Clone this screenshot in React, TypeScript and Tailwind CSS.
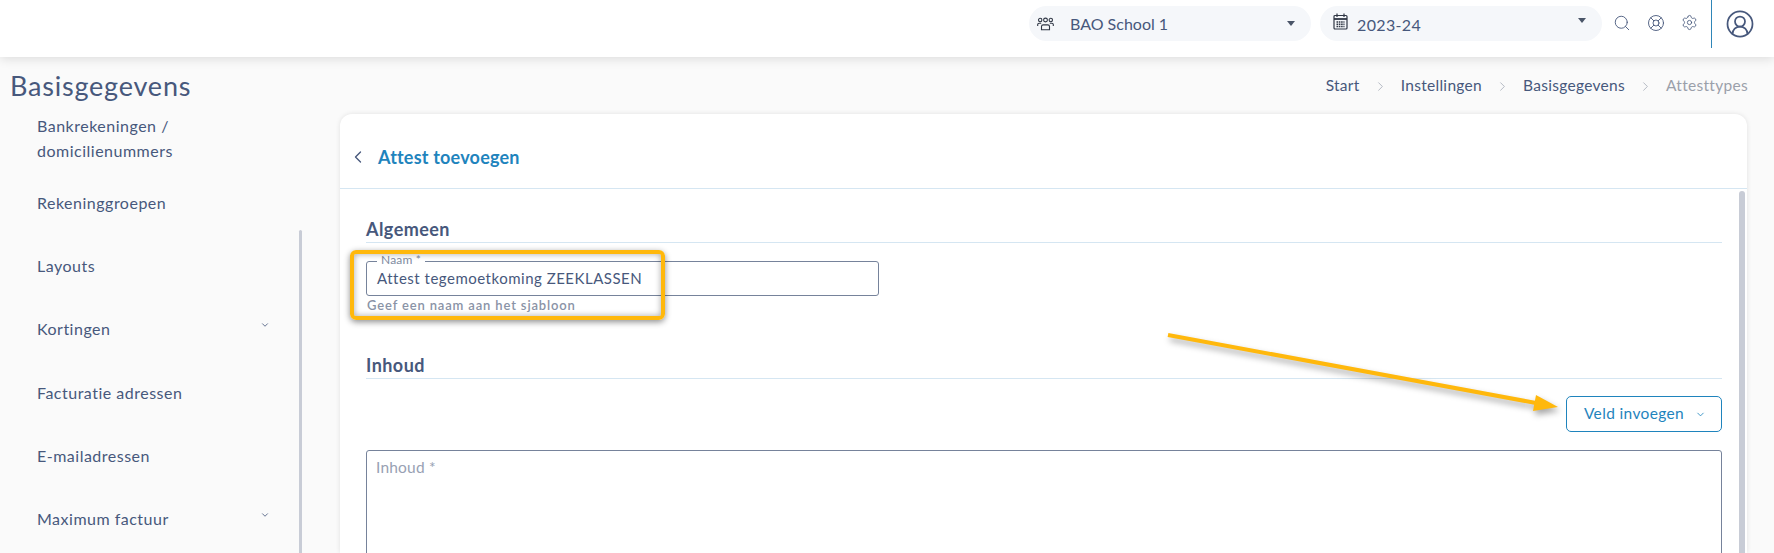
import { ChevronDown, ChevronLeft, ChevronRight, LifeBuoy, Search, Settings, CircleUserRound } from "lucide-react";

const font = { fontFamily: '"Lato", "Noto Sans", sans-serif' };

function GroupIcon() {
  return (
    <svg width="17" height="14" viewBox="0 0 17 14" fill="none" stroke="#2f3644" strokeWidth="1.1">
      <circle cx="3.2" cy="3" r="1.7" />
      <circle cx="8.5" cy="3" r="1.9" />
      <circle cx="13.8" cy="3" r="1.7" />
      <path d="M0.7 9V7.6c0-.8.7-1.3 1.5-1.3h2" />
      <path d="M16.3 9V7.6c0-.8-.7-1.3-1.5-1.3h-2" />
      <path d="M4.5 12.8V9.6c0-1 .8-1.7 1.7-1.7h4.6c.9 0 1.7.7 1.7 1.7v3.2z" />
    </svg>
  );
}

function CalendarIcon() {
  return (
    <svg width="15" height="17" viewBox="0 0 15 17" fill="none" stroke="#2f3644" strokeWidth="1.2">
      <rect x="1" y="2.5" width="13" height="13.5" rx="1" />
      <path d="M4 0.5v3.5M11 0.5v3.5" />
      <path d="M1 6h13" strokeWidth="1.8" />
      <path d="M3.5 9h8M3.5 11.2h8M3.5 13.4h8" strokeDasharray="1.6 .7" strokeWidth="1.5" />
    </svg>
  );
}

function Pill({ icon, label, textClass, caretClass }: { icon: React.ReactNode; label: string; textClass: string; caretClass: string }) {
  return (
    <div className="flex h-[35px] w-[282px] items-center rounded-full bg-[#f5f7fa] pl-[8px] pr-[16px]">
      {icon}
      <span className={`flex-1 text-[16px] text-[#47587c] ${textClass}`}>{label}</span>
      <span className={`h-0 w-0 border-x-[4.5px] border-t-[5px] border-x-transparent border-t-[#4a5568] ${caretClass}`} />
    </div>
  );
}

function Crumb({ label, last }: { label: string; last?: boolean }) {
  return (
    <>
      <span className={`text-[15.5px] tracking-[0.3px] ${last ? "text-[#9aa0aa]" : "text-[#47587c]"}`}>{label}</span>
      {!last && <ChevronRight size={15} strokeWidth={1} className="mx-[13px] text-[#8b93a3]" />}
    </>
  );
}

function NavItem({ label, chevron, className }: { label: string; chevron?: boolean; className: string }) {
  return (
    <div className={`flex items-center justify-between pl-[37px] pr-[70px] ${className}`}>
      <span className="text-[16px] leading-[25px] tracking-[0.5px] text-[#47587c]">{label}</span>
      {chevron && <ChevronDown size={10} strokeWidth={2} className="mb-[6px] text-[#47587c]" />}
    </div>
  );
}

function SectionTitle({ label }: { label: string }) {
  return (
    <div className="border-b border-[#d5e6f2] pb-[1px]">
      <h2 className="text-[18px] font-bold leading-[24px] tracking-[0.45px] text-[#47587c]">{label}</h2>
    </div>
  );
}

export default function App() {
  return (
    <div style={font} className="relative flex h-[553px] w-[1774px] flex-col overflow-hidden bg-[#fafafa]">
      <header className="z-10 flex h-[57px] shrink-0 items-start justify-end bg-white shadow-[0_2px_10px_rgba(0,0,0,0.12)]">
        <div className="mr-[11px] mt-[6px] flex gap-[9px]">
          <Pill
            icon={<span className="mr-[16px] flex"><GroupIcon /></span>}
            label="BAO School 1"
            textClass="pt-[1px]"
            caretClass=""
          />
          <Pill
            icon={<span className="mb-[4px] ml-[5px] mr-[9px] flex"><CalendarIcon /></span>}
            label="2023-24"
            textClass="pt-[2px] tracking-[0.35px]"
            caretClass="mb-[7px]"
          />
        </div>
        <div className="mt-[14px] flex gap-[16px] text-[#47587c]">
          <Search size={18} strokeWidth={1.2} />
          <LifeBuoy size={18} strokeWidth={1.2} />
          <Settings size={17} strokeWidth={1.2} />
        </div>
        <div className="ml-[13px] h-[48px] w-px bg-[#2f86b8]" />
        <CircleUserRound size={30} strokeWidth={1.4} className="ml-[13px] mr-[19px] mt-[9px] text-[#47587c]" />
      </header>

      <div className="flex min-h-0 flex-1">
        <aside className="relative w-[340px] shrink-0">
          <h1 className="ml-[10px] mt-[12px] text-[27px] leading-[34px] tracking-[0.8px] text-[#47587c]">Basisgegevens</h1>
          <nav className="mt-[10px]">
            <NavItem label="Bankrekeningen / domicilienummers" className="h-[50px] w-[300px] !pr-[40px]" />
            <NavItem label="Rekeninggroepen" className="mt-[14px] h-[50px]" />
            <NavItem label="Layouts" className="mt-[13px] h-[50px]" />
            <NavItem label="Kortingen" chevron className="mt-[13px] h-[50px]" />
            <NavItem label="Facturatie adressen" className="mt-[14px] h-[50px]" />
            <NavItem label="E-mailadressen" className="mt-[13px] h-[50px]" />
            <NavItem label="Maximum factuur" chevron className="mt-[13px] h-[50px]" />
          </nav>
          <div className="absolute bottom-0 right-[38px] top-[173px] w-[3px] rounded-t bg-[#c8ccd6]" />
        </aside>

        <main className="flex min-w-0 flex-1 flex-col pr-[27px]">
          <div className="-mr-px flex h-[57px] shrink-0 items-center justify-end pt-[1px]">
            <Crumb label="Start" />
            <Crumb label="Instellingen" />
            <Crumb label="Basisgegevens" />
            <Crumb label="Attesttypes" last />
          </div>
          <section className="relative min-h-0 flex-1 rounded-t-[12px] bg-white shadow-[0_0_5px_rgba(0,0,0,0.1)]">
            <div className="flex h-[75px] items-center border-b border-[#d5e6f2] pl-[8px] pt-[12px]">
              <ChevronLeft size={20} strokeWidth={1.6} className="text-[#47587c]" />
              <span className="ml-[10px] text-[18px] font-bold tracking-[0.2px] text-[#1f84bd]">Attest toevoegen</span>
            </div>
            <div className="pl-[26px] pr-[25px] pt-[28px]">
              <SectionTitle label="Algemeen" />
              <div className="relative mt-[18px] h-[35px] w-[513px] rounded-[3px] border border-[#76839b]">
                <span className="absolute -top-[9px] left-[10px] bg-white px-[4px] text-[12px] leading-[14px] tracking-[0.2px] text-[#7f8ba1]">Naam *</span>
                <div className="pl-[10px] text-[15px] leading-[33px] tracking-[0.5px] text-[#47587c]">Attest tegemoetkoming ZEEKLASSEN</div>
              </div>
              <p className="ml-[1px] mt-[1px] text-[13px] font-semibold leading-[17px] tracking-[0.85px] text-[#8a93a6]">Geef een naam aan het sjabloon</p>
              <div className="mt-[39px]">
                <SectionTitle label="Inhoud" />
              </div>
              <div className="mt-[17px] flex justify-end">
                <button className="flex h-[36px] w-[156px] items-center justify-center gap-[11px] rounded-[5px] border border-[#1f84bd] pl-[2px] text-[15.5px] tracking-[0.35px] text-[#1f84bd]">
                  Veld invoegen
                  <ChevronDown size={11} strokeWidth={1.8} />
                </button>
              </div>
              <div className="mt-[18px] h-[200px] rounded-[3px] border border-[#76839b] pl-[9px] pt-[5px] text-[15.5px] tracking-[0.2px] text-[#98a1b3]">Inhoud *</div>
            </div>
            <div className="absolute bottom-0 right-[2px] top-[77px] w-[6px] rounded-t bg-[#c8ccd6]" />
          </section>
        </main>
      </div>

      <div className="absolute left-[350px] top-[250px] h-[70px] w-[315px] rounded-[6px] border-[4px] border-[#ffb80c] shadow-[0_2px_6px_rgba(0,0,0,0.45),inset_0_0_6px_rgba(0,0,0,0.35)]" />

      <svg className="absolute left-[1160px] top-[325px]" width="410" height="95" viewBox="0 0 410 95" style={{ filter: "drop-shadow(2px 4px 3px rgba(0,0,0,0.35))" }}>
        <path d="M8 10 L376 78" stroke="#ffb80c" strokeWidth="4" fill="none" />
        <path d="M376 70 L398 82 L373 86 Z" fill="#ffb80c" />
      </svg>
    </div>
  );
}
